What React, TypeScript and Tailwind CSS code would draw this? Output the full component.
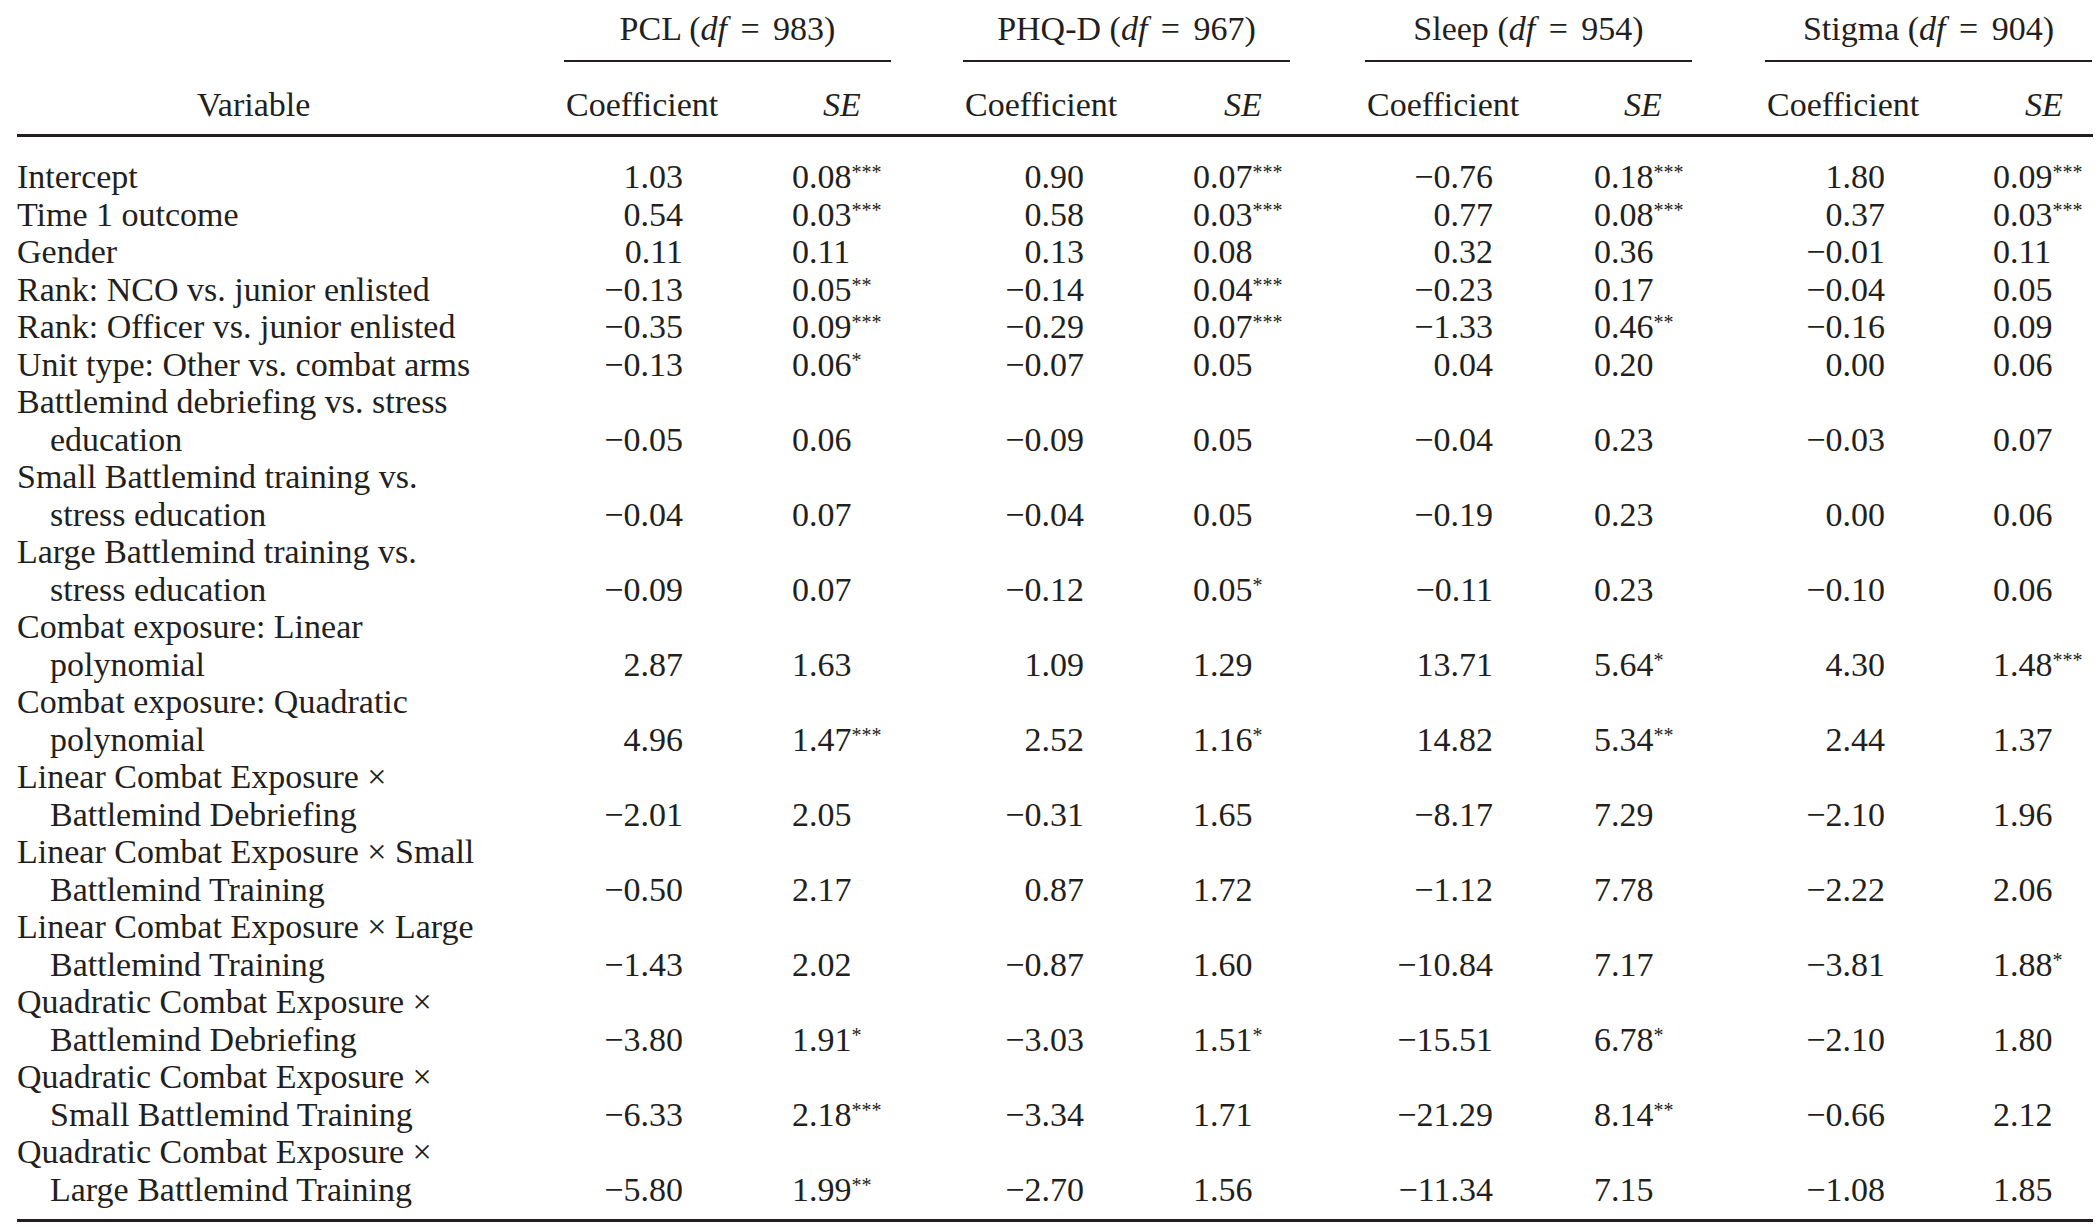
import React from "react";

type Cell = [string, string, string];
type Row = { label: string[]; cells: Cell[] };

const rows: Row[] = [
  { label: ["Intercept"], cells: [["1.03", "0.08", "***"], ["0.90", "0.07", "***"], ["−0.76", "0.18", "***"], ["1.80", "0.09", "***"]] },
  { label: ["Time 1 outcome"], cells: [["0.54", "0.03", "***"], ["0.58", "0.03", "***"], ["0.77", "0.08", "***"], ["0.37", "0.03", "***"]] },
  { label: ["Gender"], cells: [["0.11", "0.11", ""], ["0.13", "0.08", ""], ["0.32", "0.36", ""], ["−0.01", "0.11", ""]] },
  { label: ["Rank: NCO vs. junior enlisted"], cells: [["−0.13", "0.05", "**"], ["−0.14", "0.04", "***"], ["−0.23", "0.17", ""], ["−0.04", "0.05", ""]] },
  { label: ["Rank: Officer vs. junior enlisted"], cells: [["−0.35", "0.09", "***"], ["−0.29", "0.07", "***"], ["−1.33", "0.46", "**"], ["−0.16", "0.09", ""]] },
  { label: ["Unit type: Other vs. combat arms"], cells: [["−0.13", "0.06", "*"], ["−0.07", "0.05", ""], ["0.04", "0.20", ""], ["0.00", "0.06", ""]] },
  { label: ["Battlemind debriefing vs. stress", "education"], cells: [["−0.05", "0.06", ""], ["−0.09", "0.05", ""], ["−0.04", "0.23", ""], ["−0.03", "0.07", ""]] },
  { label: ["Small Battlemind training vs.", "stress education"], cells: [["−0.04", "0.07", ""], ["−0.04", "0.05", ""], ["−0.19", "0.23", ""], ["0.00", "0.06", ""]] },
  { label: ["Large Battlemind training vs.", "stress education"], cells: [["−0.09", "0.07", ""], ["−0.12", "0.05", "*"], ["−0.11", "0.23", ""], ["−0.10", "0.06", ""]] },
  { label: ["Combat exposure: Linear", "polynomial"], cells: [["2.87", "1.63", ""], ["1.09", "1.29", ""], ["13.71", "5.64", "*"], ["4.30", "1.48", "***"]] },
  { label: ["Combat exposure: Quadratic", "polynomial"], cells: [["4.96", "1.47", "***"], ["2.52", "1.16", "*"], ["14.82", "5.34", "**"], ["2.44", "1.37", ""]] },
  { label: ["Linear Combat Exposure ×", "Battlemind Debriefing"], cells: [["−2.01", "2.05", ""], ["−0.31", "1.65", ""], ["−8.17", "7.29", ""], ["−2.10", "1.96", ""]] },
  { label: ["Linear Combat Exposure × Small", "Battlemind Training"], cells: [["−0.50", "2.17", ""], ["0.87", "1.72", ""], ["−1.12", "7.78", ""], ["−2.22", "2.06", ""]] },
  { label: ["Linear Combat Exposure × Large", "Battlemind Training"], cells: [["−1.43", "2.02", ""], ["−0.87", "1.60", ""], ["−10.84", "7.17", ""], ["−3.81", "1.88", "*"]] },
  { label: ["Quadratic Combat Exposure ×", "Battlemind Debriefing"], cells: [["−3.80", "1.91", "*"], ["−3.03", "1.51", "*"], ["−15.51", "6.78", "*"], ["−2.10", "1.80", ""]] },
  { label: ["Quadratic Combat Exposure ×", "Small Battlemind Training"], cells: [["−6.33", "2.18", "***"], ["−3.34", "1.71", ""], ["−21.29", "8.14", "**"], ["−0.66", "2.12", ""]] },
  { label: ["Quadratic Combat Exposure ×", "Large Battlemind Training"], cells: [["−5.80", "1.99", "**"], ["−2.70", "1.56", ""], ["−11.34", "7.15", ""], ["−1.08", "1.85", ""]] },
];

const groups = [
  { name: "PCL", df: "983" },
  { name: "PHQ-D", df: "967" },
  { name: "Sleep", df: "954" },
  { name: "Stigma", df: "904" },
];

// SE value / SE header left offsets per group (Sleep column sits a bit tighter)
const seValuePad = ["pl-[109px]", "pl-[109px]", "pl-[101px]", "pl-[108px]"];
const seHeadPad = ["pl-[140px]", "pl-[140px]", "pl-[131px]", "pl-[140px]"];

const cols =
  "grid grid-cols-[547px_119px_280px_121px_281px_128px_272px_120px_208px]";

const Stars = ({ s }: { s: string }) =>
  s ? <span className="relative -top-[9px] text-[20px] leading-none">{s}</span> : null;

export default function App() {
  return (
    <div
      className="w-[2097px] h-[1227px] bg-white text-[#231f20] text-[34px] leading-[37.5px] pl-[17px] overflow-hidden"
      style={{ fontFamily: '"Liberation Serif", "Times New Roman", serif' }}
    >
      <div className="w-[2076px]">
        {/* group titles */}
        <div className={`${cols} pt-[10px]`}>
          <div />
          {groups.map((g) => (
            <div key={g.name} className="col-span-2">
              <div className="w-[327px] text-center whitespace-nowrap border-b-2 border-[#231f20] pb-[12px]">
                {g.name} (<i>df</i> <span className="mx-[5px]">=</span> {g.df})
              </div>
            </div>
          ))}
        </div>

        {/* column heads */}
        <div className={`${cols} mt-[24px] pb-[11px] border-b-[3px] border-[#231f20]`}>
          <div className="pl-[180px]">Variable</div>
          {groups.map((g, i) => (
            <React.Fragment key={g.name}>
              <div className="pl-[2px] whitespace-nowrap">Coefficient</div>
              <div className={`${seHeadPad[i]} italic`}>SE</div>
            </React.Fragment>
          ))}
        </div>

        {/* body */}
        <div className="pt-[21px] pb-[11px] border-b-[3px] border-[#231f20]">
          {rows.map((r) => (
            <div key={r.label.join(" ")} className={cols}>
              <div className="whitespace-nowrap">
                {r.label.map((l, i) => (
                  <div key={i} className={i > 0 ? "pl-[33px]" : ""}>
                    {l}
                  </div>
                ))}
              </div>
              {r.cells.map((c, i) => (
                <React.Fragment key={i}>
                  <div className="self-end text-right whitespace-nowrap">{c[0]}</div>
                  <div className={`self-end whitespace-nowrap ${seValuePad[i]}`}>
                    {c[1]}
                    <Stars s={c[2]} />
                  </div>
                </React.Fragment>
              ))}
            </div>
          ))}
        </div>
      </div>
    </div>
  );
}
